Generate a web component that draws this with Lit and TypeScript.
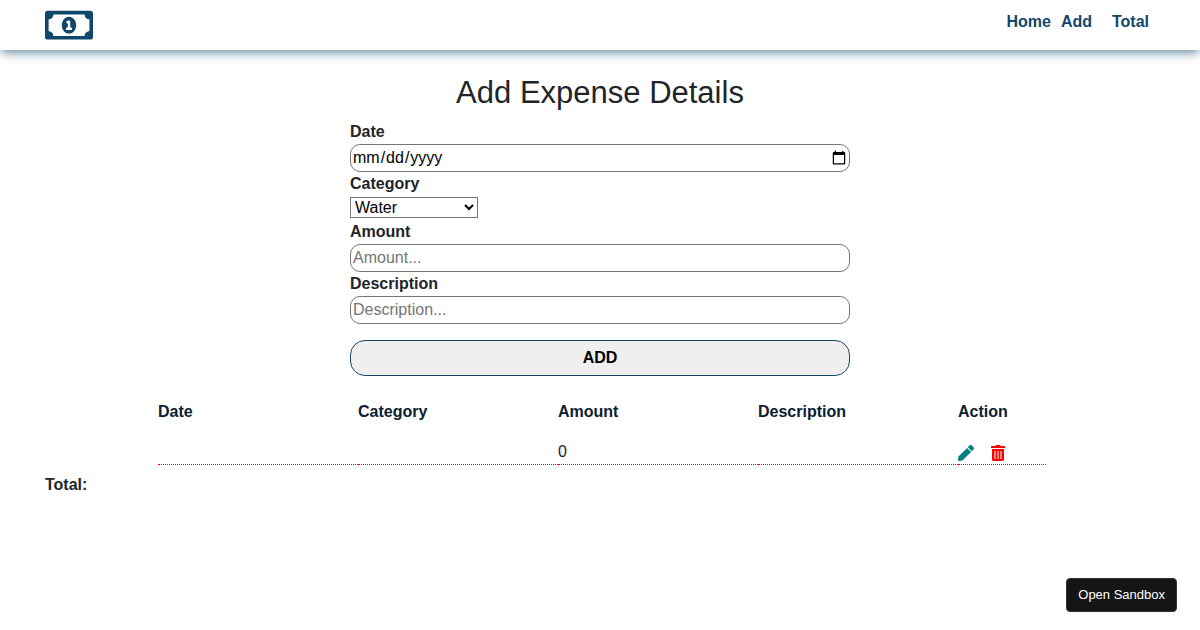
import { LitElement, html, css } from "lit";
import { customElement, state } from "lit/decorators.js";

interface Expense {
  date: string;
  category: string;
  amount: number;
  description: string;
}

const billPath =
  "M320 144c-53.02 0-96 50.14-96 112 0 61.85 42.98 112 96 112 53 0 96-50.13 96-112 0-61.86-42.98-112-96-112zm40 168c0 4.42-3.58 8-8 8h-64c-4.42 0-8-3.58-8-8v-16c0-4.42 3.58-8 8-8h16v-55.44l-.47.31a7.992 7.992 0 0 1-11.09-2.22l-8.88-13.31a7.992 7.992 0 0 1 2.22-11.09l15.33-10.22a23.99 23.99 0 0 1 13.31-4.03H328c4.42 0 8 3.58 8 8v88h16c4.42 0 8 3.58 8 8v16zM608 64H32C14.33 64 0 78.33 0 96v320c0 17.67 14.33 32 32 32h576c17.67 0 32-14.33 32-32V96c0-17.67-14.33-32-32-32zm-16 272c-35.35 0-64 28.65-64 64H112c0-35.35-28.65-64-64-64V176c35.35 0 64-28.65 64-64h416c0 35.35 28.65 64 64 64v160z";
const penPath =
  "M290.74 93.24l128.02 128.02-277.99 277.99-114.14 12.6C11.35 513.54-1.56 500.62.14 485.34l12.7-114.22 277.9-277.88zm207.2-19.06l-60.11-60.11c-18.75-18.75-49.16-18.75-67.91 0l-56.55 56.55 128.02 128.02 56.55-56.55c18.75-18.76 18.75-49.16 0-67.91z";
const trashPath =
  "M32 464a48 48 0 0 0 48 48h288a48 48 0 0 0 48-48V128H32zm272-256a16 16 0 0 1 32 0v224a16 16 0 0 1-32 0zm-96 0a16 16 0 0 1 32 0v224a16 16 0 0 1-32 0zm-96 0a16 16 0 0 1 32 0v224a16 16 0 0 1-32 0zM432 32H312l-9.4-18.7A24 24 0 0 0 281.1 0H166.8a23.72 23.72 0 0 0-21.4 13.3L136 32H16A16 16 0 0 0 0 48v32a16 16 0 0 0 16 16h416a16 16 0 0 0 16-16V48a16 16 0 0 0-16-16z";

@customElement("app-root")
export class AppRoot extends LitElement {
  static styles = css`
    :host {
      display: block;
      font-family: "Liberation Sans", Arial, sans-serif;
      font-size: 16px;
      line-height: 24px;
      color: #212529;
    }
    * {
      box-sizing: border-box;
    }
    .header {
      display: flex;
      justify-content: space-between;
      height: 50px;
      padding: 0 51px 0 45px;
      background: #fff;
      box-shadow: 0 3px 10px -1px rgb(16 71 106 / 70%);
    }
    .logo {
      display: flex;
      align-items: center;
      color: #10476a;
    }
    .logo svg {
      display: block;
      width: 48px;
    }
    .menu {
      display: flex;
      gap: 10px;
      margin: 0;
      padding: 10px 0 0;
      list-style: none;
      font-weight: bold;
    }
    .menu .spaced {
      min-width: 41px;
    }
    .menu a {
      color: #10476a;
      text-decoration: none;
    }
    .title {
      margin: 24px 0 8px;
      font-size: 31px;
      line-height: 38px;
      font-weight: 400;
      text-align: center;
    }
    .form {
      display: flex;
      flex-direction: column;
      width: min(500px, 100%);
      margin: 0 auto;
    }
    .form label {
      font-weight: bold;
    }
    .field {
      width: 100%;
      height: 28px;
      padding: 1px 2px;
      border: 1px solid #767676;
      border-radius: 10px;
      background: #fff;
      font: inherit;
      color: #000;
    }
    .field[type="date"] {
      padding: 1px 0 1px 1px;
    }
    .field::placeholder {
      color: #757575;
    }
    .choice {
      width: 128px;
      height: 21px;
      margin: 1px 0 2px;
      padding: 0;
      border: 1px solid #767676;
      border-radius: 0;
      background: #fff;
      font: inherit;
      line-height: normal;
      color: #000;
    }
    .submit {
      height: 36px;
      margin-top: 16px;
      border: 1px solid #10476a;
      border-radius: 15px;
      background: #efefef;
      color: #000;
      font: inherit;
      font-weight: bold;
    }
    .list {
      padding: 24px 45px 0 49px;
    }
    .table {
      margin: 0 auto;
      border-spacing: 0;
    }
    .table th,
    .table td {
      min-width: 88px;
      padding: 0;
      text-align: left;
    }
    .table th {
      padding-bottom: 16px;
      color: #0b2133;
    }
    .table .wide {
      width: 200px;
      min-width: 200px;
    }
    .table td {
      height: 25px;
      border-bottom: 1px dotted red;
      vertical-align: top;
    }
    .actions {
      display: flex;
      gap: 17px;
      padding-top: 5px;
    }
    .icon {
      display: block;
      padding: 0;
      border: 0;
      background: none;
      color: teal;
    }
    .icon svg {
      display: block;
      height: 16px;
    }
    .danger {
      color: red;
    }
    .total {
      margin: 8px 45px 0;
      font-weight: bold;
    }
    .sandbox {
      position: fixed;
      right: 23px;
      bottom: 18px;
      height: 34px;
      padding: 0 11px 2px;
      border: 1px solid #343434;
      border-radius: 4px;
      background: #151515;
      color: #fff;
      font-family: inherit;
      font-size: 13px;
    }
  `;

  @state() private expenses: Expense[] = [
    { date: "", category: "", amount: 0, description: "" },
  ];

  render() {
    return html`
      <header class="header">
        <a class="logo" href="#home" aria-label="Expenses">
          <svg viewBox="0 0 640 512" fill="currentColor"><path d=${billPath} /></svg>
        </a>
        <nav>
          <ul class="menu">
            <li><a href="#home">Home</a></li>
            <li class="spaced"><a href="#add">Add</a></li>
            <li><a href="#total">Total</a></li>
          </ul>
        </nav>
      </header>
      <main>
        <h2 class="title">Add Expense Details</h2>
        <form class="form" @submit=${(e: Event) => e.preventDefault()}>
          <label for="date">Date</label>
          <input class="field" id="date" type="date" />
          <label for="category">Category</label>
          <select class="choice" id="category">
            <option>Water</option>
          </select>
          <label for="amount">Amount</label>
          <input class="field" id="amount" type="number" placeholder="Amount..." />
          <label for="description">Description</label>
          <input class="field" id="description" type="text" placeholder="Description..." />
          <button class="submit" type="submit">ADD</button>
        </form>
        <section class="list">
          <table class="table">
            <thead>
              <tr>
                <th class="wide">Date</th>
                <th class="wide">Category</th>
                <th class="wide">Amount</th>
                <th class="wide">Description</th>
                <th>Action</th>
              </tr>
            </thead>
            <tbody>
              ${this.expenses.map(
                (item) => html`<tr>
                  <td>${item.date}</td>
                  <td>${item.category}</td>
                  <td>${item.amount}</td>
                  <td>${item.description}</td>
                  <td>
                    <div class="actions">
                      <button class="icon" type="button" aria-label="Edit">
                        <svg viewBox="0 0 512 512" fill="currentColor"><path d=${penPath} /></svg>
                      </button>
                      <button class="icon danger" type="button" aria-label="Delete">
                        <svg viewBox="0 0 448 512" fill="currentColor"><path d=${trashPath} /></svg>
                      </button>
                    </div>
                  </td>
                </tr>`
              )}
            </tbody>
          </table>
        </section>
        <p class="total">Total:</p>
      </main>
      <button class="sandbox" type="button">Open Sandbox</button>
    `;
  }
}
